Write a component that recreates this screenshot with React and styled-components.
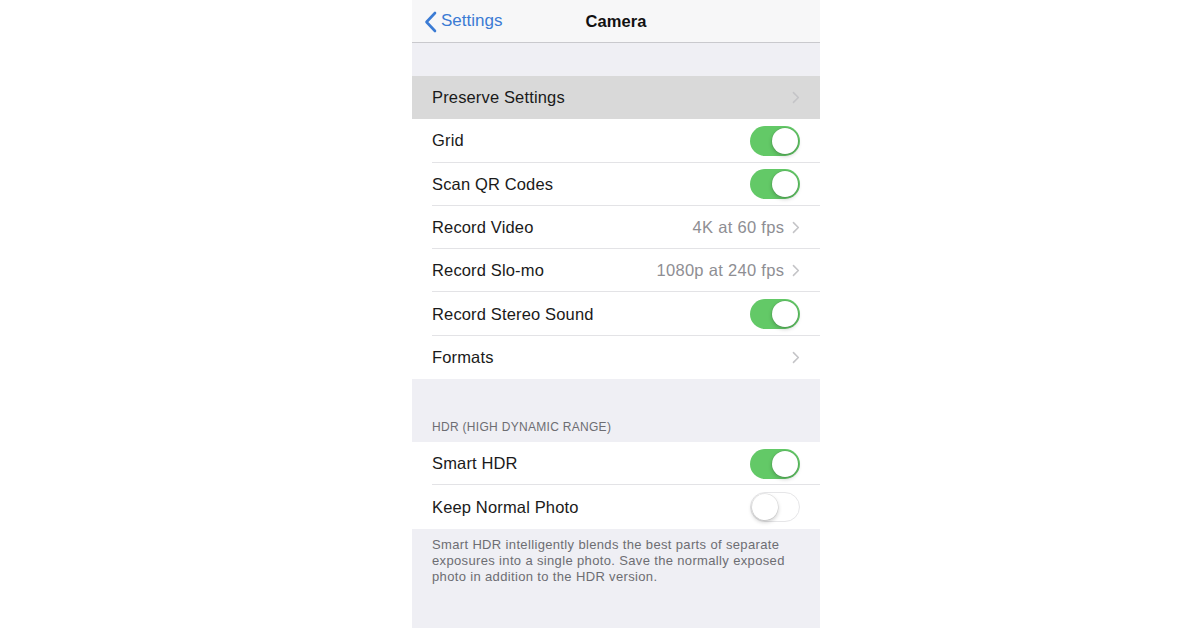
import React from 'react'
import styled, { createGlobalStyle } from 'styled-components'

const GlobalStyle = createGlobalStyle`
  html, body {
    margin: 0;
    padding: 0;
    background: #ffffff;
    font-family: "Liberation Sans", Arial, sans-serif;
    -webkit-font-smoothing: antialiased;
  }
`

const groups = [
  {
    rows: [
      { label: 'Preserve Settings', chevron: true, active: true },
      { label: 'Grid', toggle: true, on: true },
      { label: 'Scan QR Codes', toggle: true, on: true },
      { label: 'Record Video', value: '4K at 60 fps', chevron: true },
      { label: 'Record Slo-mo', value: '1080p at 240 fps', chevron: true },
      { label: 'Record Stereo Sound', toggle: true, on: true },
      { label: 'Formats', chevron: true },
    ],
  },
  {
    header: 'HDR (High Dynamic Range)',
    rows: [
      { label: 'Smart HDR', toggle: true, on: true },
      { label: 'Keep Normal Photo', toggle: true, on: false },
    ],
    footer:
      'Smart HDR intelligently blends the best parts of separate exposures into a single photo. Save the normally exposed photo in addition to the HDR version.',
  },
]

function Chevron({ color = '#c4c4c7', size = 13 }) {
  return (
    <svg width={size * 0.6} height={size} viewBox="0 0 8 13" fill="none">
      <path d="M1.5 1.5 L6.5 6.5 L1.5 11.5" stroke={color} strokeWidth="1.6" strokeLinecap="round" strokeLinejoin="round" />
    </svg>
  )
}

function BackChevron() {
  return (
    <svg width="13" height="22" viewBox="0 0 13 22" fill="none">
      <path d="M11 2 L2.5 11 L11 20" stroke="#3b7bd4" strokeWidth="2.6" strokeLinecap="round" strokeLinejoin="round" />
    </svg>
  )
}

function App() {
  return (
    <>
      <GlobalStyle />
      <Page>
        <Phone>
          <NavBar>
            <BackButton>
              <BackChevron />
              <span>Settings</span>
            </BackButton>
            <Title>Camera</Title>
          </NavBar>
          {groups.map((group, gi) => (
            <Section key={gi}>
              {group.header ? <SectionHeader>{group.header}</SectionHeader> : <Spacer />}
              <Group>
                {group.rows.map((row, ri) => (
                  <Row key={ri} $active={row.active} $last={ri === group.rows.length - 1}>
                    <Label>{row.label}</Label>
                    <Accessory>
                      {row.value && <Value>{row.value}</Value>}
                      {row.chevron && <Chevron />}
                      {row.toggle && (
                        <Switch $on={row.on}>
                          <Knob $on={row.on} />
                        </Switch>
                      )}
                    </Accessory>
                  </Row>
                ))}
              </Group>
              {group.footer && <SectionFooter>{group.footer}</SectionFooter>}
            </Section>
          ))}
        </Phone>
      </Page>
    </>
  )
}

export default App

const Page = styled.main`
  width: 100%;
  height: 628px;
  display: flex;
  justify-content: center;
  overflow: hidden;
  background: #ffffff;
`

const Phone = styled.div`
  width: 408px;
  height: 628px;
  margin-left: 32px;
  background: #efeff4;
  display: flex;
  flex-direction: column;
`

const NavBar = styled.header`
  position: relative;
  height: 42px;
  flex-shrink: 0;
  background: #f7f7f8;
  border-bottom: 1px solid #c9c9cd;
  display: flex;
  align-items: center;
  justify-content: center;
`

const BackButton = styled.div`
  position: absolute;
  left: 12px;
  top: 0;
  bottom: 0;
  display: flex;
  align-items: center;
  gap: 4px;
  color: #3b7bd4;
  font-size: 17px;

  svg {
    margin-top: 1px;
  }
`

const Title = styled.h1`
  margin: 0;
  font-size: 16.5px;
  font-weight: 700;
  color: #111;
  letter-spacing: 0.1px;
`

const Section = styled.section`
  display: flex;
  flex-direction: column;
`

const Spacer = styled.div`
  height: 33px;
`

const SectionHeader = styled.div`
  padding: 41px 20px 7px 20px;
  font-size: 12px;
  line-height: 15px;
  color: #6d6d72;
  text-transform: uppercase;
  letter-spacing: 0.3px;
`

const Group = styled.div`
  background: #ffffff;
`

const Row = styled.div`
  position: relative;
  height: 43.3px;
  display: flex;
  align-items: center;
  justify-content: space-between;
  padding: 0 20px;
  background: ${(p) => (p.$active ? '#d9d9d9' : '#ffffff')};

  &:after {
    content: '';
    display: ${(p) => (p.$last || p.$active ? 'none' : 'block')};
    position: absolute;
    left: 20px;
    right: 0;
    bottom: 0;
    height: 1px;
    background: #e3e3e6;
  }
`

const Label = styled.span`
  font-size: 16.5px;
  letter-spacing: 0.15px;
  color: #1a1a1a;
`

const Accessory = styled.div`
  display: flex;
  align-items: center;
  gap: 8px;
`

const Value = styled.span`
  font-size: 16.5px;
  letter-spacing: 0.3px;
  color: #8e8e93;
`

const Switch = styled.div`
  position: relative;
  width: 50px;
  height: 30px;
  border-radius: 15px;
  box-sizing: border-box;
  background: ${(p) => (p.$on ? '#63c967' : '#ffffff')};
  border: ${(p) => (p.$on ? 'none' : '1.5px solid #e6e6e8')};
`

const Knob = styled.div`
  position: absolute;
  top: ${(p) => (p.$on ? '2px' : '0.5px')};
  left: ${(p) => (p.$on ? '22px' : '0.5px')};
  width: 26px;
  height: 26px;
  border-radius: 50%;
  background: #ffffff;
  box-shadow: 0 2px 4px rgba(0, 0, 0, 0.22), 0 0 0 0.5px rgba(0, 0, 0, 0.12);
`

const SectionFooter = styled.p`
  margin: 0;
  padding: 8px 20px 0 20px;
  font-size: 13px;
  line-height: 16px;
  letter-spacing: 0.35px;
  color: #6d6d72;
`
